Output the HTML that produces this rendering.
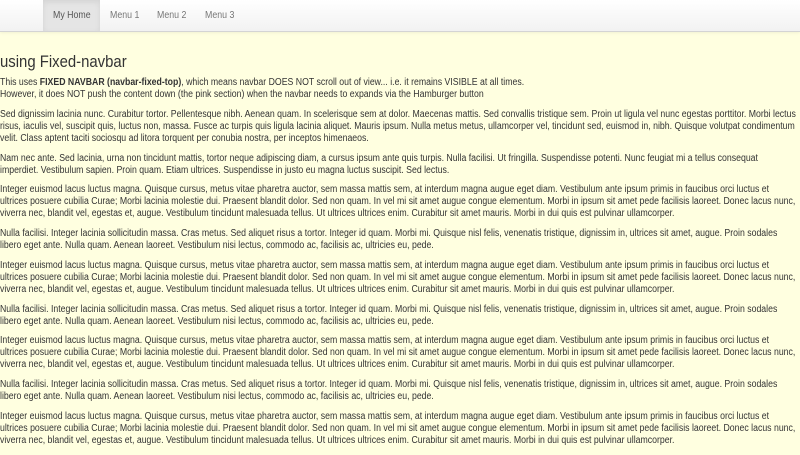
<!DOCTYPE html>
<html><head><meta charset="utf-8"><style>
html,body{margin:0;padding:0;}
body{width:800px;height:450px;overflow:hidden;background:#ffffe0;font-family:"Liberation Sans",sans-serif;color:#333;font-size:10px;line-height:12px;}
.nav{position:fixed;top:0;left:0;width:800px;height:31px;background:linear-gradient(#ffffff,#f2f2f2);border-bottom:1px solid #d4d4d4;box-shadow:0 1px 3px rgba(0,0,0,0.06);z-index:2;}
.nav a{position:absolute;top:0;height:31px;line-height:31px;font-size:10px;color:#777;text-decoration:none;}
.nav a span{display:inline-block;transform:scaleX(0.88);transform-origin:0 50%;}
.nav a.act{background:#e5e5e5;color:#555;box-shadow:inset 0 2px 6px rgba(0,0,0,0.08);}
h1{position:absolute;left:0;top:52px;margin:0;font-size:17px;font-weight:normal;line-height:20px;color:#333;transform:scaleX(0.876);transform-origin:0 0;white-space:nowrap;}
.c{position:absolute;left:0;top:77px;width:920px;transform:scaleX(0.873);transform-origin:0 0;}
p{margin:0 0 7.75px 0;white-space:nowrap;}
</style></head><body>
<div class="nav">
<a class="act" style="left:43px;width:57px;"><span style="margin-left:10px">My Home</span></a>
<a style="left:110px"><span>Menu 1</span></a>
<a style="left:157px"><span>Menu 2</span></a>
<a style="left:205px"><span>Menu 3</span></a>
</div>
<h1>using Fixed-navbar</h1>
<div class="c">
<p>This uses <b>FIXED NAVBAR (navbar-fixed-top)</b>, which means navbar DOES NOT scroll out of view... i.e. it remains VISIBLE at all times.<br>However, it does NOT push the content down (the pink section) when the navbar needs to expands via the Hamburger button</p>
<p>Sed dignissim lacinia nunc. Curabitur tortor. Pellentesque nibh. Aenean quam. In scelerisque sem at dolor. Maecenas mattis. Sed convallis tristique sem. Proin ut ligula vel nunc egestas porttitor. Morbi lectus<br>risus, iaculis vel, suscipit quis, luctus non, massa. Fusce ac turpis quis ligula lacinia aliquet. Mauris ipsum. Nulla metus metus, ullamcorper vel, tincidunt sed, euismod in, nibh. Quisque volutpat condimentum<br>velit. Class aptent taciti sociosqu ad litora torquent per conubia nostra, per inceptos himenaeos.</p>
<p>Nam nec ante. Sed lacinia, urna non tincidunt mattis, tortor neque adipiscing diam, a cursus ipsum ante quis turpis. Nulla facilisi. Ut fringilla. Suspendisse potenti. Nunc feugiat mi a tellus consequat<br>imperdiet. Vestibulum sapien. Proin quam. Etiam ultrices. Suspendisse in justo eu magna luctus suscipit. Sed lectus.</p>
<p>Integer euismod lacus luctus magna. Quisque cursus, metus vitae pharetra auctor, sem massa mattis sem, at interdum magna augue eget diam. Vestibulum ante ipsum primis in faucibus orci luctus et<br>ultrices posuere cubilia Curae; Morbi lacinia molestie dui. Praesent blandit dolor. Sed non quam. In vel mi sit amet augue congue elementum. Morbi in ipsum sit amet pede facilisis laoreet. Donec lacus nunc,<br>viverra nec, blandit vel, egestas et, augue. Vestibulum tincidunt malesuada tellus. Ut ultrices ultrices enim. Curabitur sit amet mauris. Morbi in dui quis est pulvinar ullamcorper.</p>
<p>Nulla facilisi. Integer lacinia sollicitudin massa. Cras metus. Sed aliquet risus a tortor. Integer id quam. Morbi mi. Quisque nisl felis, venenatis tristique, dignissim in, ultrices sit amet, augue. Proin sodales<br>libero eget ante. Nulla quam. Aenean laoreet. Vestibulum nisi lectus, commodo ac, facilisis ac, ultricies eu, pede.</p>
<p>Integer euismod lacus luctus magna. Quisque cursus, metus vitae pharetra auctor, sem massa mattis sem, at interdum magna augue eget diam. Vestibulum ante ipsum primis in faucibus orci luctus et<br>ultrices posuere cubilia Curae; Morbi lacinia molestie dui. Praesent blandit dolor. Sed non quam. In vel mi sit amet augue congue elementum. Morbi in ipsum sit amet pede facilisis laoreet. Donec lacus nunc,<br>viverra nec, blandit vel, egestas et, augue. Vestibulum tincidunt malesuada tellus. Ut ultrices ultrices enim. Curabitur sit amet mauris. Morbi in dui quis est pulvinar ullamcorper.</p>
<p>Nulla facilisi. Integer lacinia sollicitudin massa. Cras metus. Sed aliquet risus a tortor. Integer id quam. Morbi mi. Quisque nisl felis, venenatis tristique, dignissim in, ultrices sit amet, augue. Proin sodales<br>libero eget ante. Nulla quam. Aenean laoreet. Vestibulum nisi lectus, commodo ac, facilisis ac, ultricies eu, pede.</p>
<p>Integer euismod lacus luctus magna. Quisque cursus, metus vitae pharetra auctor, sem massa mattis sem, at interdum magna augue eget diam. Vestibulum ante ipsum primis in faucibus orci luctus et<br>ultrices posuere cubilia Curae; Morbi lacinia molestie dui. Praesent blandit dolor. Sed non quam. In vel mi sit amet augue congue elementum. Morbi in ipsum sit amet pede facilisis laoreet. Donec lacus nunc,<br>viverra nec, blandit vel, egestas et, augue. Vestibulum tincidunt malesuada tellus. Ut ultrices ultrices enim. Curabitur sit amet mauris. Morbi in dui quis est pulvinar ullamcorper.</p>
<p>Nulla facilisi. Integer lacinia sollicitudin massa. Cras metus. Sed aliquet risus a tortor. Integer id quam. Morbi mi. Quisque nisl felis, venenatis tristique, dignissim in, ultrices sit amet, augue. Proin sodales<br>libero eget ante. Nulla quam. Aenean laoreet. Vestibulum nisi lectus, commodo ac, facilisis ac, ultricies eu, pede.</p>
<p>Integer euismod lacus luctus magna. Quisque cursus, metus vitae pharetra auctor, sem massa mattis sem, at interdum magna augue eget diam. Vestibulum ante ipsum primis in faucibus orci luctus et<br>ultrices posuere cubilia Curae; Morbi lacinia molestie dui. Praesent blandit dolor. Sed non quam. In vel mi sit amet augue congue elementum. Morbi in ipsum sit amet pede facilisis laoreet. Donec lacus nunc,<br>viverra nec, blandit vel, egestas et, augue. Vestibulum tincidunt malesuada tellus. Ut ultrices ultrices enim. Curabitur sit amet mauris. Morbi in dui quis est pulvinar ullamcorper.</p>
</div>
</body></html>
